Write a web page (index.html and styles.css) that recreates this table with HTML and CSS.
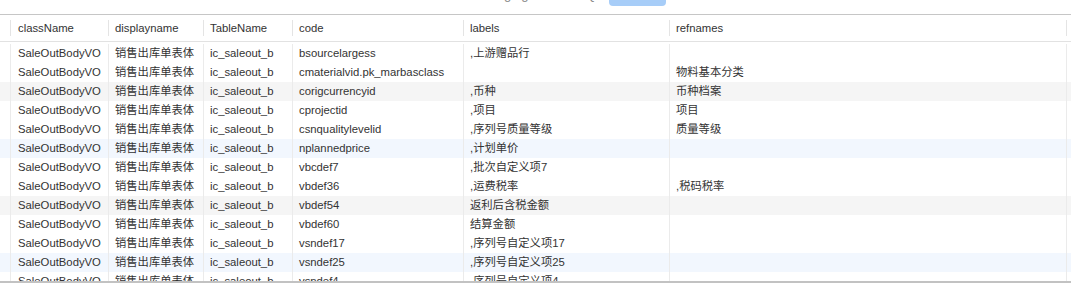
FILE: index.html
```html
<!DOCTYPE html>
<html lang="zh-CN">
<head>
<meta charset="utf-8">
<title>Fields</title>
<link rel="stylesheet" href="styles.css">
</head>
<body>
<div class="toolbar">
  <span class="toolbar-text">Paging · 1 ·· of · Query</span>
  <button class="toolbar-btn">Query</button>
</div>
<div class="grid">
  <div class="row head">
    <div class="cell lead"></div>
    <div class="cell c1">className</div>
    <div class="cell">displayname</div>
    <div class="cell">TableName</div>
    <div class="cell">code</div>
    <div class="cell">labels</div>
    <div class="cell">refnames</div>
  </div>
  <div class="body">
    <div class="row"><div class="cell lead"></div><div class="cell c1">SaleOutBodyVO</div><div class="cell">销售出库单表体</div><div class="cell">ic_saleout_b</div><div class="cell">bsourcelargess</div><div class="cell">,上游赠品行</div><div class="cell"></div></div>
    <div class="row"><div class="cell lead"></div><div class="cell c1">SaleOutBodyVO</div><div class="cell">销售出库单表体</div><div class="cell">ic_saleout_b</div><div class="cell">cmaterialvid.pk_marbasclass</div><div class="cell"></div><div class="cell">物料基本分类</div></div>
    <div class="row gray"><div class="cell lead"></div><div class="cell c1">SaleOutBodyVO</div><div class="cell">销售出库单表体</div><div class="cell">ic_saleout_b</div><div class="cell">corigcurrencyid</div><div class="cell">,币种</div><div class="cell">币种档案</div></div>
    <div class="row"><div class="cell lead"></div><div class="cell c1">SaleOutBodyVO</div><div class="cell">销售出库单表体</div><div class="cell">ic_saleout_b</div><div class="cell">cprojectid</div><div class="cell">,项目</div><div class="cell">项目</div></div>
    <div class="row"><div class="cell lead"></div><div class="cell c1">SaleOutBodyVO</div><div class="cell">销售出库单表体</div><div class="cell">ic_saleout_b</div><div class="cell">csnqualitylevelid</div><div class="cell">,序列号质量等级</div><div class="cell">质量等级</div></div>
    <div class="row blue"><div class="cell lead"></div><div class="cell c1">SaleOutBodyVO</div><div class="cell">销售出库单表体</div><div class="cell">ic_saleout_b</div><div class="cell">nplannedprice</div><div class="cell">,计划单价</div><div class="cell"></div></div>
    <div class="row"><div class="cell lead"></div><div class="cell c1">SaleOutBodyVO</div><div class="cell">销售出库单表体</div><div class="cell">ic_saleout_b</div><div class="cell">vbcdef7</div><div class="cell">,批次自定义项7</div><div class="cell"></div></div>
    <div class="row"><div class="cell lead"></div><div class="cell c1">SaleOutBodyVO</div><div class="cell">销售出库单表体</div><div class="cell">ic_saleout_b</div><div class="cell">vbdef36</div><div class="cell">,运费税率</div><div class="cell">,税码税率</div></div>
    <div class="row gray"><div class="cell lead"></div><div class="cell c1">SaleOutBodyVO</div><div class="cell">销售出库单表体</div><div class="cell">ic_saleout_b</div><div class="cell">vbdef54</div><div class="cell">返利后含税金额</div><div class="cell"></div></div>
    <div class="row"><div class="cell lead"></div><div class="cell c1">SaleOutBodyVO</div><div class="cell">销售出库单表体</div><div class="cell">ic_saleout_b</div><div class="cell">vbdef60</div><div class="cell">结算金额</div><div class="cell"></div></div>
    <div class="row"><div class="cell lead"></div><div class="cell c1">SaleOutBodyVO</div><div class="cell">销售出库单表体</div><div class="cell">ic_saleout_b</div><div class="cell">vsndef17</div><div class="cell">,序列号自定义项17</div><div class="cell"></div></div>
    <div class="row blue"><div class="cell lead"></div><div class="cell c1">SaleOutBodyVO</div><div class="cell">销售出库单表体</div><div class="cell">ic_saleout_b</div><div class="cell">vsndef25</div><div class="cell">,序列号自定义项25</div><div class="cell"></div></div>
    <div class="row"><div class="cell lead"></div><div class="cell c1">SaleOutBodyVO</div><div class="cell">销售出库单表体</div><div class="cell">ic_saleout_b</div><div class="cell">vsndef4</div><div class="cell">,序列号自定义项4</div><div class="cell"></div></div>
  </div>
</div>
</body>
</html>
```

FILE: styles.css
```css
html, body {
  margin: 0;
  padding: 0;
  background: #fff;
}
body {
  font-family: "Liberation Sans", "Noto Sans CJK SC", sans-serif;
  font-size: 11.3px;
  color: #333;
  width: 1071px;
  height: 291px;
  overflow: hidden;
}
.toolbar {
  display: flex;
  align-items: flex-end;
  height: 30px;
  margin-top: -24px;
  margin-bottom: 8px;
  padding-left: 488px;
  gap: 12px;
}
.toolbar-text {
  font-size: 13px;
  line-height: 16px;
  color: #888;
  margin-bottom: 3px;
  width: 109px;
  white-space: nowrap;
  overflow: hidden;
}
.toolbar-btn {
  width: 57px;
  height: 28px;
  border: none;
  border-radius: 4px;
  background: #a7cdf8;
  color: #a7cdf8;
  font: inherit;
  padding: 0;
}
.grid {
  border-top: 1px solid #c6c6c6;
}
.row {
  display: grid;
  grid-template-columns: 11px 98px 95px 89px 171px 206px 397px 4px;
  height: 19px;
  line-height: 19px;
}
.cell {
  border-right: 1px solid #ebebeb;
  padding-left: 6px;
  white-space: nowrap;
  overflow: hidden;
}
.cell.lead {
  padding-left: 0;
}
.cell.c1 {
  padding-left: 7px;
}
.row.head {
  height: 16px;
  line-height: 16px;
  padding: 5px 0;
  border-bottom: 1px solid #e2e2e2;
}
.row.head .cell {
  border-right-color: #e4e4e4;
}
.body {
  height: 237px;
  padding-top: 2px;
  overflow: hidden;
  border-bottom: 2px solid #c2c2c2;
}
.row.gray {
  background: #f5f5f5;
}
.row.blue {
  background: #f2f7fe;
}
```
